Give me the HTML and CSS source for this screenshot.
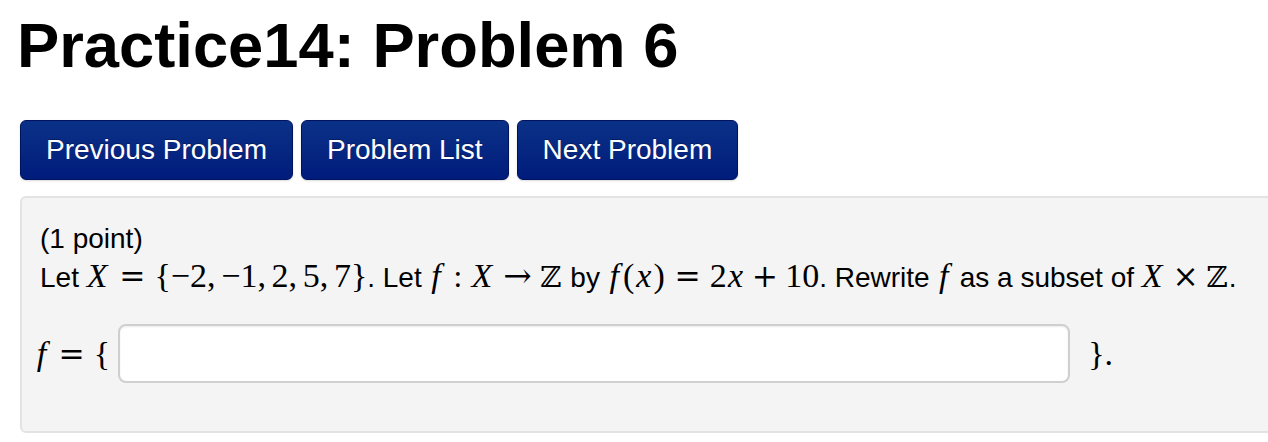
FILE: index.html
```html
<!DOCTYPE html>
<html lang="en">
<head>
<meta charset="utf-8">
<title>Practice14: Problem 6</title>
<link rel="stylesheet" href="styles.css">
</head>
<body>
  <h1 class="page-title">Practice14: Problem 6</h1>

  <nav class="nav-buttons">
    <a class="nav-btn" href="#">Previous Problem</a>
    <a class="nav-btn" href="#">Problem List</a>
    <a class="nav-btn" href="#">Next Problem</a>
  </nav>

  <section class="problem">
    <div class="points">(1 point)</div>
    <p class="statement">Let <span class="math"><i class="mi-X">X</i><span class="rel">=</span>{−2,<span class="thin"></span>−1,<span class="thin"></span>2,<span class="thin"></span>5,<span class="thin"></span>7}</span>. Let <span class="math"><i class="mi-f">f</i><span class="rel colon">:</span><i class="mi-X">X</i><span class="rel arrow">→</span><span class="bb">ℤ</span></span> by <span class="math"><i class="mi-f">f</i><span class="paren">(</span><i class="mi-x">x</i><span class="paren">)</span><span class="rel">=</span>2<i class="mi-x">x</i><span class="bin">+</span>10</span>. Rewrite <span class="math"><i class="mi-f">f</i></span> as a subset of <span class="math"><i class="mi-X">X</i><span class="bin">×</span><span class="bb">ℤ</span></span>.</p>

    <div class="answer-row">
      <span class="math"><i class="mi-f">f</i><span class="rel">=</span>{</span>
      <input class="answer" type="text" aria-label="answer">
      <span class="math">}.</span>
    </div>
  </section>
</body>
</html>
```

FILE: styles.css
```css
html {
  overflow: hidden;
}

body {
  margin: 0;
  padding: 0 0 0 20px;
  font-family: "Liberation Sans", Arial, Helvetica, sans-serif;
  font-size: 28px;
  color: #000;
  background: #fff;
}

.page-title {
  margin: 0 0 0 -3px;
  padding-top: 14px;
  font-size: 63.3px;
  font-weight: bold;
  line-height: 63px;
}

.nav-buttons {
  display: flex;
  gap: 8px;
  margin-top: 43px;
}

.nav-btn {
  display: block;
  height: 60px;
  box-sizing: border-box;
  padding: 0 25px;
  line-height: 58px;
  color: #fff;
  text-decoration: none;
  font-size: 28px;
  text-shadow: 0 -1px 0 rgba(0, 0, 0, 0.3);
  background: linear-gradient(#0b3187, #001c7c);
  border: 1px solid #00135f;
  border-radius: 6px;
  box-shadow: 0 1px 2px rgba(0, 0, 0, 0.15);
}

.problem {
  margin-top: 16px;
  width: 1280px;
  box-sizing: border-box;
  padding: 22px 18px 48px;
  background: #f4f4f4;
  border: 2px solid #e3e3e3;
  border-radius: 6px;
  line-height: 38px;
}

.points {
  line-height: 38px;
}

.statement {
  margin: 0;
  white-space: nowrap;
}

/* inline math, spaced like TeX: relations get thick spaces, binary ops medium */
.math {
  font-family: "Liberation Serif", "Times New Roman", "DejaVu Serif", serif;
  font-size: 34px;
  line-height: 1;
}

.math i {
  font-style: italic;
}

.math .mi-X {
  padding-right: 0.08em;
}

.math .mi-f {
  padding: 0 0.1em 0 0.05em;
}

.math .mi-x {
  padding: 0 0.04em;
}

.math .paren {
  padding: 0 0.02em;
}

.math .thin {
  display: inline-block;
  width: 0.167em;
}

.math .rel {
  font-family: "DejaVu Serif", serif;
  font-size: 0.92em;
  padding: 0 0.29em;
}

.math .bin {
  font-family: "DejaVu Serif", serif;
  font-size: 0.92em;
  padding: 0 0.23em;
}

.math .colon {
  font-family: "Liberation Serif", serif;
  padding: 0 0.3em;
}

.math .arrow {
  font-size: 1em;
  padding: 0 0.24em;
}

.math .bb {
  font-family: "DejaVu Serif", serif;
  font-size: 0.86em;
  padding-right: 0.05em;
}

.answer-row {
  display: flex;
  align-items: center;
  gap: 8px;
  margin-top: 27px;
  margin-left: -5px;
}

.answer {
  width: 952px;
  height: 59px;
  box-sizing: border-box;
  border: 2px solid #cfcfcf;
  border-radius: 8px;
  background: #fff;
  box-shadow: inset 0 1px 2px rgba(0, 0, 0, 0.08);
  font-size: 28px;
  margin: 0 10px 0 0;
}
```
